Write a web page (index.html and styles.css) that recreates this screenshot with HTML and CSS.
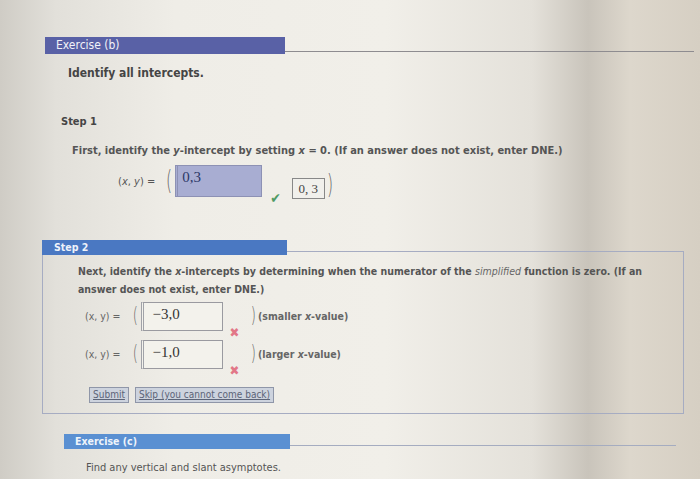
FILE: index.html
```html
<!DOCTYPE html>
<html>
<head>
<meta charset="utf-8">
<link rel="stylesheet" href="styles.css">
</head>
<body>
<div class="page">
  <div class="ex-head"><span class="ex-bar">Exercise (b)</span></div>
  <p class="intro">Identify all intercepts.</p>

  <div class="step1">
    <div class="step-title">Step 1</div>
    <p class="q">First, identify the <i>y</i>-intercept by setting <i>x</i> = 0. (If an answer does not exist, enter DNE.)</p>
    <div class="row row1">
      <span class="lbl">(<i>x</i>, <i>y</i>) =</span>
      <span class="paren big">(</span>
      <span class="inp filled">0,3</span>
      <span class="mark ok">&#10004;</span>
      <span class="ans">0, 3</span>
      <span class="paren big">)</span>
    </div>
  </div>

  <div class="step2">
    <div class="step2-head"><span class="step2-bar">Step 2</span></div>
    <div class="step2-box">
      <p class="q2">Next, identify the <i>x</i>-intercepts by determining when the numerator of the <i class="it">simplified</i> function is zero. (If an<br>answer does not exist, enter DNE.)</p>
      <div class="row row2">
        <span class="lbl">(x, y) =</span>
        <span class="paren">(</span>
        <span class="inp">&minus;3,0</span>
        <span class="mark bad">&#10006;</span>
        <span class="paren close">)</span>
        <span class="note">(smaller <i>x</i>-value)</span>
      </div>
      <div class="row row2">
        <span class="lbl">(x, y) =</span>
        <span class="paren">(</span>
        <span class="inp">&minus;1,0</span>
        <span class="mark bad">&#10006;</span>
        <span class="paren close">)</span>
        <span class="note">(larger <i>x</i>-value)</span>
      </div>
      <div class="btns">
        <span class="btn">Submit</span>
        <span class="btn">Skip (you cannot come back)</span>
      </div>
    </div>
  </div>

  <div class="exc-head"><span class="exc-bar">Exercise (c)</span></div>
  <p class="intro2">Find any vertical and slant asymptotes.</p>
</div>
</body>
</html>
```
FILE: styles.css
```css
html, body {
  margin: 0;
  padding: 0;
  height: 100%;
}
body {
  background: linear-gradient(90deg, #cfccc5 0%, #e2e0da 8%, #efede7 25%, #f1efe9 55%, #e4e1da 76%, #c9c4bb 84%, #ddd7cc 90%, #d6cfc3 100%);
  font-family: "DejaVu Sans Condensed", "DejaVu Sans", Verdana, sans-serif;
  color: #4a4a4a;
  overflow: hidden;
}
.page {
  padding-top: 34px;
  height: 479px;
  box-sizing: border-box;
}
.ex-head {
  margin-left: 45px;
  margin-right: 6px;
  border-bottom: 1px solid #8e8c90;
  height: 17px;
}
.ex-bar {
  display: inline-block;
  width: 229px;
  height: 17px;
  line-height: 17px;
  padding-left: 11px;
  background: #5961a6;
  color: #f2f2f8;
  font-size: 12px;
}
.intro {
  margin: 14px 0 0 68px;
  font-size: 12px;
  font-weight: bold;
  color: #454545;
}
.step1 {
  margin-left: 61px;
  margin-top: 35px;
}
.step-title {
  font-size: 11px;
  font-weight: bold;
  color: #454545;
}
.q {
  margin: 16px 0 0 11px;
  font-size: 11px;
  font-weight: bold;
  color: #555;
}
.row {
  display: flex;
  align-items: flex-start;
}
.row1 {
  margin: 8px 0 0 57px;
  height: 40px;
}
.lbl {
  font-size: 11px;
  color: #555;
  margin-top: 10px;
  width: 46px;
}
.paren {
  font-family: "DejaVu Sans", sans-serif;
  font-weight: 200;
  color: #666;
  font-size: 24px;
  line-height: 28px;
  transform: scaleX(0.6);
}
.paren.big {
  font-size: 26px;
  line-height: 30px;
}
.inp {
  box-sizing: border-box;
  border: 1px solid #9a9aa0;
  border-left: 3px double #8a8e9e;
  background: #f3f2ec;
  font-family: "Liberation Serif", serif;
  font-size: 15px;
  color: #333;
  padding: 3px 0 0 6px;
}
.row1 .inp {
  width: 87px;
  height: 32px;
  background: #a8add2;
  border-color: #8d91b4;
  color: #2c3868;
  margin-left: 1px;
  padding-left: 4px;
}
.mark {
  align-self: flex-end;
}
.mark.ok {
  color: #4f9a64;
  font-size: 14px;
  margin: 0 0 0 8px;
  position: relative;
  top: 1px;
}
.ans {
  margin: 13px 0 0 11px;
  box-sizing: border-box;
  width: 33px;
  height: 21px;
  border: 1px solid #888;
  background: #f1f0ec;
  font-family: "Liberation Serif", serif;
  font-size: 13px;
  text-align: center;
  line-height: 19px;
  color: #444;
}
.row1 .paren.big:last-child {
  margin-top: 4px;
}
.step2 {
  margin-top: 31px;
  margin-left: 42px;
  margin-right: 16px;
}
.step2-head {
  height: 15px;
}
.step2-bar {
  display: inline-block;
  width: 233px;
  height: 15px;
  line-height: 15px;
  padding-left: 12px;
  background: #4a78c2;
  color: #eef2fa;
  font-size: 10.5px;
  font-weight: bold;
}
.step2-box {
  border: 1px solid #a6acc2;
  height: 163px;
  box-sizing: border-box;
  padding: 10px 0 0 35px;
}
.q2 {
  margin: 0;
  font-size: 10.5px;
  font-weight: bold;
  color: #555;
  line-height: 18px;
  width: 600px;
}
.q2 .it {
  font-weight: normal;
  color: #666;
}
.row2 {
  margin: 4px 0 0 7px;
  height: 34px;
}
.row2 + .row2 {
  margin-top: 4px;
}
.row2 .lbl {
  font-size: 10.5px;
  margin-top: 8px;
  width: 46px;
  color: #666;
}
.row2 .paren {
  font-size: 22px;
  line-height: 26px;
}
.row2 .inp {
  width: 82px;
  height: 29px;
  font-size: 15px;
  padding: 3px 0 0 9px;
  border-left: 3px double #a0a2a8;
  margin-left: 1px;
}
.mark.bad {
  color: #e27787;
  font-size: 13px;
  margin-left: 7px;
  position: relative;
  top: 4px;
}
.paren.close {
  margin-left: 10px;
}
.note {
  font-size: 10.5px;
  font-weight: bold;
  color: #666;
  margin-top: 8px;
}
.btns {
  display: flex;
  gap: 6px;
  margin: 13px 0 0 11px;
}
.btn {
  font-size: 10px;
  color: #5c6478;
  text-decoration: underline;
  background: #cdd3de;
  border: 1px solid #8f96a8;
  padding: 1px 3px 1px 3px;
  line-height: 12px;
}
.exc-head {
  margin: 16px 24px 0 64px;
  border-bottom: 1px solid #a5acc0;
  height: 15px;
}
.exc-bar {
  display: inline-block;
  width: 215px;
  height: 15px;
  line-height: 15px;
  padding-left: 11px;
  background: #5a90d2;
  color: #eef4fb;
  font-size: 10.5px;
  font-weight: bold;
}
.intro2 {
  margin: 15px 0 0 86px;
  font-size: 11px;
  color: #555;
}
```
